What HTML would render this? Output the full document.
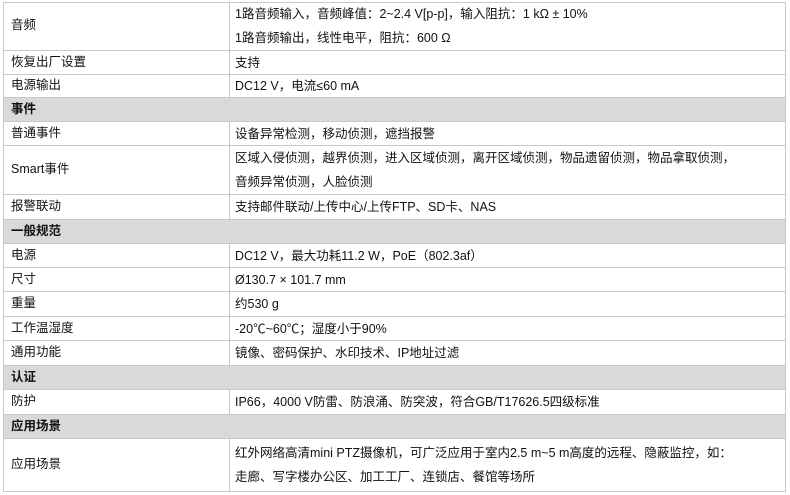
<!DOCTYPE html>
<html><head><meta charset="utf-8"><style>
body{margin:0;width:790px;height:495px;background:#fff;overflow:hidden;font-family:"Liberation Sans","Noto Sans CJK SC",sans-serif;font-size:12.5px;color:#111;line-height:16px}
.r{position:absolute;left:3px;width:783px;border:1px solid #c8c8c8;box-sizing:border-box;border-top:none}
.h{background:#d9d9d9;font-weight:bold}
.l{position:absolute;left:7px;top:0;bottom:0;display:flex;align-items:center;line-height:16px;padding-bottom:2px}
.v{position:absolute;left:225px;top:0;bottom:0;border-left:1px solid #c8c8c8;padding-left:5px;display:flex;flex-direction:column;justify-content:center;line-height:24px}
</style></head><body>
<div style="position:absolute;left:3px;top:2px;width:783px;border-top:1px solid #c8c8c8"></div>
<div class="r" style="top:2px;height:49px"><div class="l">音频</div><div class="v"><div>1路音频输入，音频峰值：2~2.4 V[p-p]，输入阻抗：1 kΩ ± 10%</div><div>1路音频输出，线性电平，阻抗：600 Ω</div></div></div>
<div class="r" style="top:51px;height:24px"><div class="l">恢复出厂设置</div><div class="v">支持</div></div>
<div class="r" style="top:75px;height:23px"><div class="l">电源输出</div><div class="v">DC12 V，电流≤60 mA</div></div>
<div class="r h" style="top:98px;height:24px"><div class="l">事件</div></div>
<div class="r" style="top:122px;height:24px"><div class="l">普通事件</div><div class="v">设备异常检测，移动侦测，遮挡报警</div></div>
<div class="r" style="top:146px;height:49px"><div class="l">Smart事件</div><div class="v"><div>区域入侵侦测，越界侦测，进入区域侦测，离开区域侦测，物品遗留侦测，物品拿取侦测，</div><div>音频异常侦测，人脸侦测</div></div></div>
<div class="r" style="top:195px;height:25px"><div class="l">报警联动</div><div class="v">支持邮件联动/上传中心/上传FTP、SD卡、NAS</div></div>
<div class="r h" style="top:220px;height:24px"><div class="l">一般规范</div></div>
<div class="r" style="top:244px;height:24px"><div class="l">电源</div><div class="v">DC12 V，最大功耗11.2 W，PoE（802.3af）</div></div>
<div class="r" style="top:268px;height:24px"><div class="l">尺寸</div><div class="v">Ø130.7 × 101.7 mm</div></div>
<div class="r" style="top:292px;height:25px"><div class="l">重量</div><div class="v">约530 g</div></div>
<div class="r" style="top:317px;height:24px"><div class="l">工作温湿度</div><div class="v">-20℃~60℃；湿度小于90%</div></div>
<div class="r" style="top:341px;height:25px"><div class="l">通用功能</div><div class="v">镜像、密码保护、水印技术、IP地址过滤</div></div>
<div class="r h" style="top:366px;height:24px"><div class="l">认证</div></div>
<div class="r" style="top:390px;height:25px"><div class="l">防护</div><div class="v">IP66，4000 V防雷、防浪涌、防突波，符合GB/T17626.5四级标准</div></div>
<div class="r h" style="top:415px;height:24px"><div class="l">应用场景</div></div>
<div class="r" style="top:439px;height:53px"><div class="l">应用场景</div><div class="v"><div>红外网络高清mini PTZ摄像机，可广泛应用于室内2.5 m~5 m高度的远程、隐蔽监控，如：</div><div>走廊、写字楼办公区、加工工厂、连锁店、餐馆等场所</div></div></div>
</body></html>
